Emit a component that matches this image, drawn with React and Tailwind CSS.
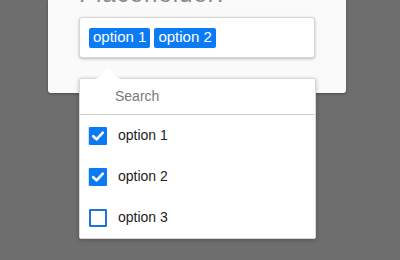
import React from "react";

const font = { fontFamily: '"Liberation Sans", Arial, sans-serif' };

function Check({ checked }) {
  if (checked) {
    return (
      <span className="flex h-[18px] w-[18px] items-center justify-center rounded-[1px] bg-[#0b7bf5] shadow-[-1px_0_0_#cfe0f5]">
        <svg viewBox="0 0 18 18" className="h-[18px] w-[18px]">
          <path d="M4.2 9.2 L7.6 12.4 L13.8 5.6" fill="none" stroke="#fff" strokeWidth="2.6" strokeLinecap="round" strokeLinejoin="round" />
        </svg>
      </span>
    );
  }
  return <span className="h-[18px] w-[18px] rounded-[1px] border-2 border-[#1c74d6] bg-white" />;
}

export default function App() {
  const opts = [
    { label: "option 1", checked: true },
    { label: "option 2", checked: true },
    { label: "option 3", checked: false },
  ];
  return (
    <div className="relative h-[260px] w-[400px] overflow-hidden bg-[#6e6e6e]" style={font}>
      <div className="ml-[48px] flex h-[93px] w-[298px] flex-col rounded-b-[3px] bg-[#fafafa] px-[31px] shadow-[0_1px_3px_rgba(0,0,0,0.3)]">
        <div className="-mt-[18px] h-[24px] text-[24px] leading-[24px] tracking-[1px] text-[#8a8a8a]">Placeholder:</div>
        <div className="mt-[11px] flex h-[41px] items-center gap-[4px] rounded-[3px] border border-[#d6d6d6] bg-white px-[9px] shadow-[0_1px_3px_rgba(0,0,0,0.25)]">
          <span className="flex h-[20px] items-center rounded-[2px] bg-[#0b7bf5] px-[4px] text-[15px] text-white">option 1</span>
          <span className="flex h-[20px] items-center rounded-[2px] bg-[#0b7bf5] px-[4px] text-[15px] text-white">option 2</span>
        </div>
      </div>

      <div className="absolute left-[79px] top-[78px] w-[237px] rounded-[2px] border border-[#d9d9d9] bg-white shadow-[0_1px_4px_rgba(0,0,0,0.25)]">
        <div className="absolute -top-[11px] left-[16px] h-0 w-0 border-x-[12px] border-b-[11px] border-x-transparent border-b-white" />
        <div className="flex h-[36px] items-center border-b border-[#cccccc] pl-[35px] text-[14px] text-[#7a7a7a]">Search</div>
        {opts.map((o) => (
          <div key={o.label} className="flex h-[41px] items-center gap-[11px] pl-[9px] text-[14px] text-[#222]">
            <Check checked={o.checked} />
            <span>{o.label}</span>
          </div>
        ))}
      </div>
    </div>
  );
}
